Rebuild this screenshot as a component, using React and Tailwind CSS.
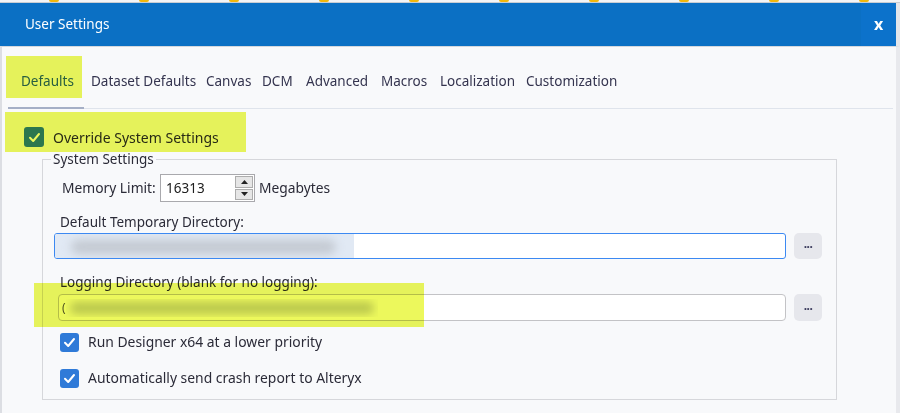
import React from "react";

const dots = [0, 1, 2, 3, 4, 5, 6, 7, 8, 9];

function Check({ color }) {
  return (
    <div className={`flex h-[19px] w-[19px] items-center justify-center rounded-[3px] ${color}`}>
      <svg width="13" height="13" viewBox="0 0 13 13" fill="none">
        <path d="M2 6.8 L5.2 10 L11 3" stroke="white" strokeWidth="2" strokeLinecap="round" strokeLinejoin="round" />
      </svg>
    </div>
  );
}

const tabs = [
  { label: "Dataset Defaults", w: "w-[115px]" },
  { label: "Canvas", w: "w-[56px]" },
  { label: "DCM", w: "w-[44px]" },
  { label: "Advanced", w: "w-[75px]" },
  { label: "Macros", w: "w-[59px]" },
  { label: "Localization", w: "w-[86px]" },
  { label: "Customization", w: "w-[110px]" },
];

export default function App() {
  return (
    <div
      className="relative flex h-[413px] w-[900px] flex-col overflow-hidden bg-[#f8f9fb] text-[13.5px] text-[#2b2b38]"
      style={{ fontFamily: '"Noto Sans", "Open Sans", sans-serif' }}
    >
      {/* top strip with dots */}
      <div className="flex h-[3px] gap-[80px] border-b border-[#c9cdd3] bg-[#f3f4f6] pl-[49px]">
        {dots.map((d) => (
          <div key={d} className="h-[2px] w-[10px] rounded-b-full bg-[#f1b70c]" />
        ))}
      </div>

      {/* title bar */}
      <div className="flex h-[43px] items-stretch border-r-[4px] border-[#e4e6ea] bg-[#0b70c4] pl-[25px]">
        <div className="flex flex-1 items-center text-[13.5px] text-white">User Settings</div>
        <div className="flex w-[35px] items-center justify-center bg-[#0c72cb] pb-[2px] text-[16px] font-bold text-white">
          x
        </div>
      </div>

      {/* content */}
      <div className="flex flex-1 flex-col border-l-2 border-r-[4px] border-t border-l-[#dcdee3] border-r-[#e8e9ed] border-t-[#d4d8de]">
        {/* tabs */}
        <div className="ml-[6px] mr-[3px] flex h-[62px] border-b border-[#dfe4ec]">
          <div className="flex h-full w-[76px] flex-col">
            <span className="mt-[25px] pl-[13px] leading-[18px] text-[#2c62b0]">Defaults</span>
            <div className="mt-auto -mb-px h-[2px] bg-[#a5afc6]" />
          </div>
          <div className="w-[7px]" />
          {tabs.map((t) => (
            <div key={t.label} className={`flex h-full flex-col ${t.w}`}>
              <span className="mt-[25px] whitespace-nowrap leading-[18px] text-[#34344f]">{t.label}</span>
            </div>
          ))}
        </div>

        {/* override */}
        <div className="mt-[18px] flex h-[20px] items-center gap-[9px] pl-[22px]">
          <Check color="bg-[#2f7ad8] w-[20px] h-[20px]" />
          <span className="text-[14px] text-[#2b2b38]">Override System Settings</span>
        </div>

        {/* group */}
        <fieldset className="ml-[40px] mt-[3px] flex h-[250px] w-[795px] flex-col border border-[#d6d7db]">
          <legend className="ml-[8px] px-[2px] text-[13.5px] leading-[18px] text-[#2b2b38]">System Settings</legend>

          <div className="mt-[6px] flex h-[28px] items-center pl-[19px]">
            <span className="w-[98px] text-[13.8px]">Memory Limit:</span>
            <div className="flex h-[28px] w-[95px] items-stretch border border-[#a9a9ad] bg-white">
              <span className="flex flex-1 items-center pl-[5px] text-[13.5px] text-[#202020]">16313</span>
              <div className="my-[1px] mr-[1px] flex w-[18px] flex-col gap-[1px]">
                <div className="flex flex-1 items-center justify-center border border-[#adadad] bg-[#e6e6e6]">
                  <svg width="7" height="4" viewBox="0 0 7 4"><path d="M0 4 L3.5 0 L7 4Z" fill="#222" /></svg>
                </div>
                <div className="flex flex-1 items-center justify-center border border-[#adadad] bg-[#e6e6e6]">
                  <svg width="7" height="4" viewBox="0 0 7 4"><path d="M0 0 L3.5 4 L7 0Z" fill="#222" /></svg>
                </div>
              </div>
            </div>
            <span className="ml-[4px] text-[13.8px]">Megabytes</span>
          </div>

          <div className="mt-[11px] pl-[17px] leading-[18px]">Default Temporary Directory:</div>
          <div className="mt-[2px] flex h-[26px] items-stretch pl-[11px] pr-[14px]">
            <div className="flex flex-1 items-stretch overflow-hidden rounded-[3px] border-[1.5px] border-[#3c89f2] bg-white">
              <div className="-my-[2px] -ml-[2px] w-[301px] overflow-hidden bg-[#e1e9f4]">
                <div className="mx-[18px] mt-[8px] h-[14px] rounded-full bg-[#c3c9d1] blur-[5px]" />
              </div>
            </div>
            <div className="ml-[8px] flex w-[28px] items-center justify-center rounded-[5px] bg-[#e6e7ec] pb-[4px] text-[12px] font-bold tracking-[-0.5px] text-[#3a3a5c]">
              ...
            </div>
          </div>

          <div className="mt-[14px] pl-[17px] leading-[18px]">Logging Directory (blank for no logging):</div>
          <div className="mt-[3px] flex h-[27px] items-stretch pl-[15px] pr-[14px]">
            <div className="flex flex-1 items-center rounded-[4px] border border-[#c3c3c6] bg-white pl-[3px]">
              <span className="text-[12px] text-[#555]">(</span>
              <div className="h-[18px] w-[312px] overflow-hidden">
                <div className="mx-[4px] mt-[3px] h-[12px] rounded-full bg-[#c9cdd4] blur-[4px]" />
              </div>
            </div>
            <div className="ml-[8px] flex w-[28px] items-center justify-center rounded-[5px] bg-[#e6e7ec] pb-[4px] text-[12px] font-bold tracking-[-0.5px] text-[#3a3a5c]">
              ...
            </div>
          </div>

          <div className="mt-[11px] flex items-center gap-[9px] pl-[17px]">
            <Check color="bg-[#2f7ad8]" />
            <span className="text-[13.9px]">Run Designer x64 at a lower priority</span>
          </div>
          <div className="mt-[15px] flex items-center gap-[9px] pl-[17px]">
            <Check color="bg-[#2f7ad8]" />
            <span className="text-[13.9px]">Automatically send crash report to Alteryx</span>
          </div>
        </fieldset>
      </div>

      {/* highlighter overlays */}
      <div className="pointer-events-none absolute left-[6px] top-[56px] h-[42px] w-[76px] bg-[#ecf85c] mix-blend-multiply" />
      <div className="pointer-events-none absolute left-[5px] top-[112px] h-[40px] w-[241px] bg-[#ecf85c] mix-blend-multiply" />
      <div className="pointer-events-none absolute left-[34px] top-[283px] h-[44px] w-[390px] bg-[#ecf85c] mix-blend-multiply" />
    </div>
  );
}
